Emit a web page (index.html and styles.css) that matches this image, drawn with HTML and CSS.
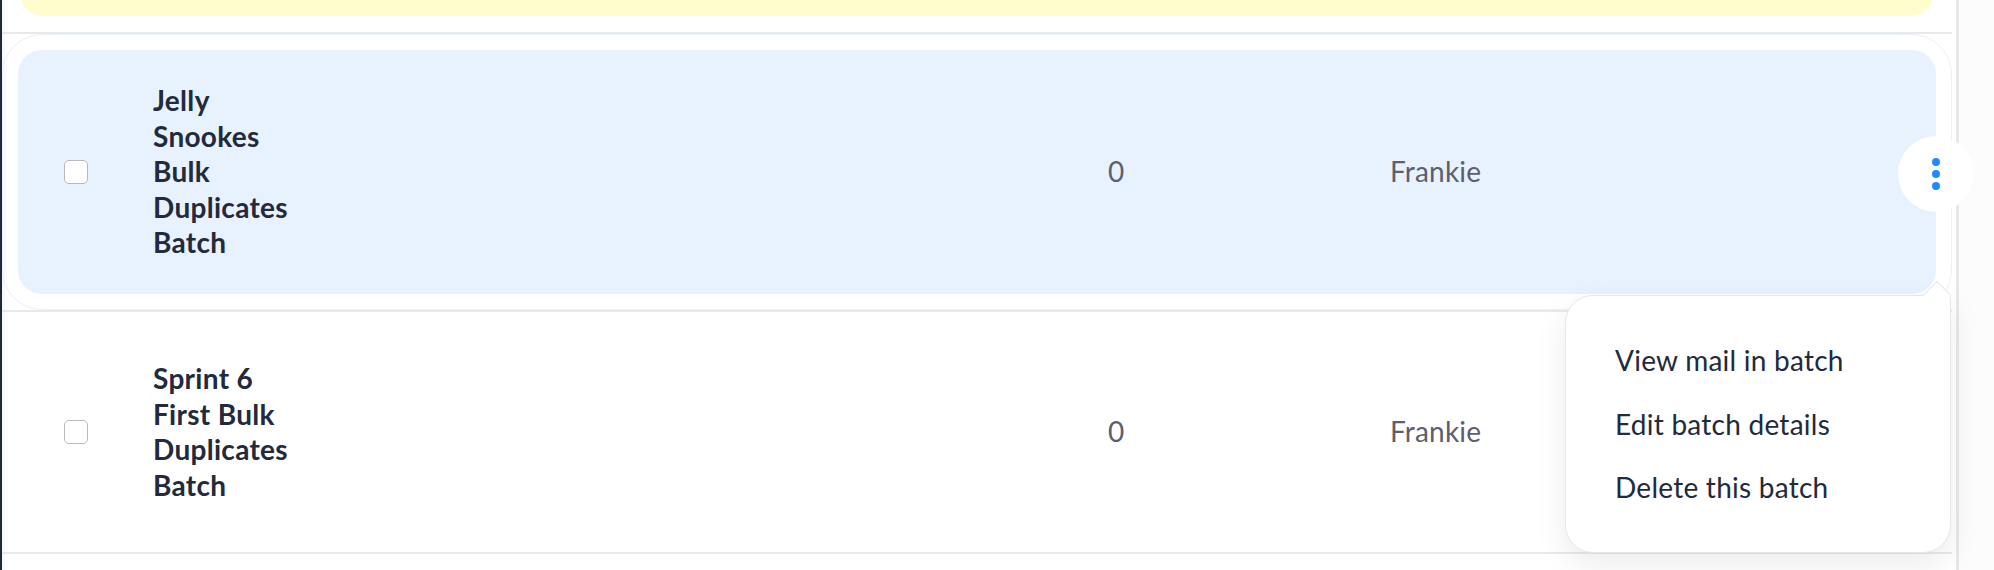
FILE: index.html
```html
<!DOCTYPE html>
<html lang="en">
<head>
<meta charset="utf-8">
<title>Batches</title>
<link rel="stylesheet" href="styles.css">
</head>
<body>
  <div class="edge"></div>
  <main class="main">
    <div class="banner"></div>
    <div class="table">
      <div class="row row-active">
        <div class="row-hover">
          <div class="row-body row-body-active">
            <div class="cell cell-check"><input type="checkbox" class="check" aria-label="Select batch"></div>
            <div class="cell cell-name"><span class="name">Jelly Snookes Bulk Duplicates Batch</span></div>
            <div class="cell cell-count">0</div>
            <div class="cell cell-owner">Frankie</div>
            <button class="kebab" aria-label="More actions">
              <span class="dot"></span><span class="dot"></span><span class="dot"></span>
            </button>
          </div>
        </div>
      </div>
      <div class="row">
        <div class="row-body row-body-plain">
          <div class="cell cell-check"><input type="checkbox" class="check" aria-label="Select batch"></div>
          <div class="cell cell-name"><span class="name">Sprint 6 First Bulk Duplicates Batch</span></div>
          <div class="cell cell-count">0</div>
          <div class="cell cell-owner">Frankie</div>
        </div>
      </div>
    </div>
    <div class="menu">
      <span class="menu-arrow"></span>
      <div class="menu-item">View mail in batch</div>
      <div class="menu-item">Edit batch details</div>
      <div class="menu-item">Delete this batch</div>
    </div>
  </main>
</body>
</html>
```

FILE: styles.css
```css
* { box-sizing: border-box; }

html, body {
  margin: 0;
  padding: 0;
}

body {
  width: 1994px;
  height: 570px;
  overflow: hidden;
  display: flex;
  background: #fcfcfc;
  font-family: "Lato", "Noto Sans", sans-serif;
  color: #222a3b;
}

.edge {
  width: 2px;
  flex: 0 0 2px;
  background: #1f2838;
}

.main {
  position: relative;
  width: 1957px;
  flex: 0 0 1957px;
  background: #ffffff;
  border-right: 3px solid #e8e8e8;
  box-shadow: inset 9px 0 9px -9px rgba(0, 0, 0, 0.08);
}

.banner {
  height: 16px;
  margin: 0 24px 0 20px;
  background: #fffdcd;
  border-bottom-left-radius: 24px 16px;
  border-bottom-right-radius: 24px 16px;
}

.table {
  margin-top: 16px;
  margin-right: 4px;
  border-top: 2px solid #e9e9e9;
}

.row {
  border-bottom: 2px solid #e9e9e9;
}

.row-hover {
  border: 1px solid #e9f1fb;
  border-radius: 40px;
  padding: 15px 15px 15.5px 15px;
}

.row-body {
  position: relative;
  display: grid;
  grid-template-columns: 89px 955px 282px 1fr;
  align-items: center;
  padding-left: 46px;
  font-size: 28px;
  line-height: 35.5px;
}

.row-body-active {
  background: #e8f2fe;
  border-radius: 24px;
  padding-top: 33px;
  padding-bottom: 33px;
}

.row-body-plain {
  margin-left: 16px;
  padding-top: 49px;
  padding-bottom: 49px;
}

.cell-check {
  display: flex;
  align-items: center;
}

.check {
  appearance: none;
  -webkit-appearance: none;
  margin: 0;
  width: 24px;
  height: 24px;
  border: 1.5px solid #b9b9bd;
  border-radius: 5px;
  background: #ffffff;
}

.name {
  display: block;
  width: 150px;
  font-weight: 700;
  letter-spacing: 0.3px;
  color: #222a3b;
}

.cell-count,
.cell-owner {
  color: #5d5e6e;
  letter-spacing: 0.2px;
}

.kebab {
  position: absolute;
  right: -38px;
  top: 50%;
  width: 76px;
  height: 76px;
  margin-top: -36px;
  padding: 0;
  border: none;
  border-radius: 50%;
  background: #ffffff;
  display: flex;
  flex-direction: column;
  align-items: center;
  justify-content: center;
  gap: 4px;
}

.dot {
  width: 8px;
  height: 8px;
  border-radius: 50%;
  background: #1e8cff;
}

.menu {
  position: absolute;
  left: 1563px;
  top: 295px;
  width: 386px;
  padding: 33px 0 32px 0;
  background: #ffffff;
  border: 1px solid #e6e6e6;
  border-radius: 28px 4px 28px 28px;
  box-shadow: 0 12px 32px rgba(0, 0, 0, 0.08);
}

.menu-arrow {
  position: absolute;
  top: -11px;
  right: 3px;
  width: 20px;
  height: 20px;
  background: #ffffff;
  border-top: 1px solid #e6e6e6;
  border-left: 1px solid #e6e6e6;
  transform: rotate(45deg);
}

.menu-item {
  padding-left: 49px;
  font-size: 28px;
  line-height: 63.5px;
  letter-spacing: 0.25px;
  color: #222a3b;
}
```
